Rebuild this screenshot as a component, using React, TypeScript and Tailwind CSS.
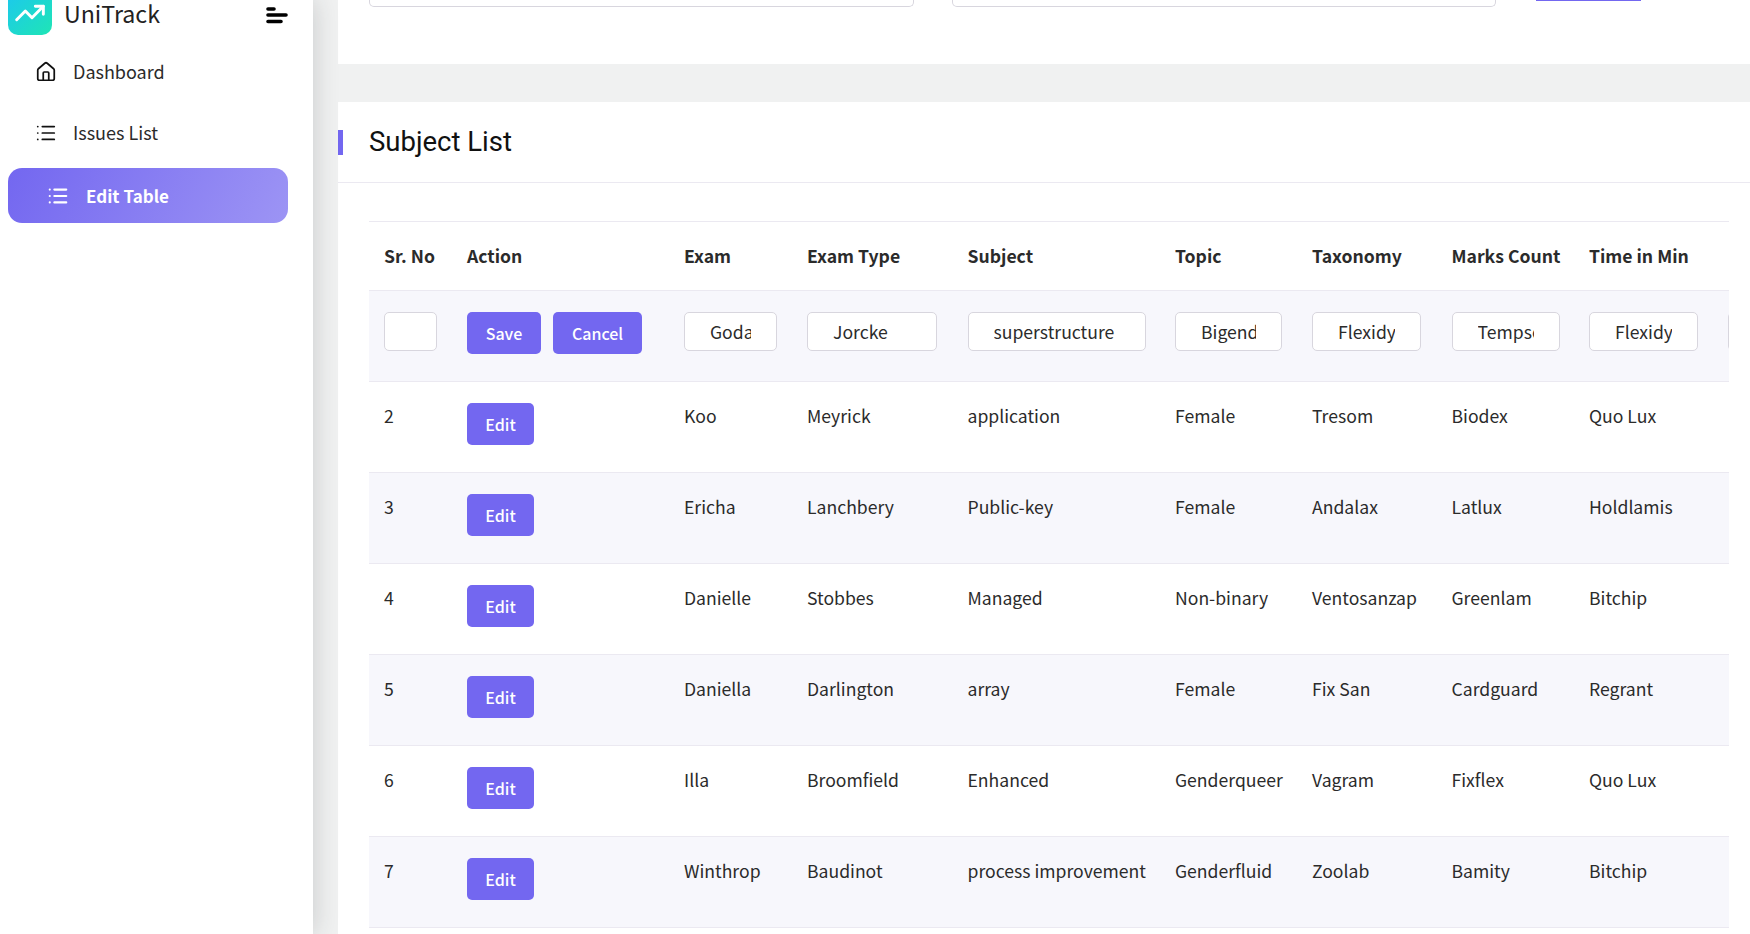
import { House, List, TrendingUp } from "lucide-react";

const font = { fontFamily: '"Noto Sans CJK SC","Noto Sans",sans-serif' };

const rows = [
  ["2", "Koo", "Meyrick", "application", "Female", "Tresom", "Biodex", "Quo Lux"],
  ["3", "Ericha", "Lanchbery", "Public-key", "Female", "Andalax", "Latlux", "Holdlamis"],
  ["4", "Danielle", "Stobbes", "Managed", "Non-binary", "Ventosanzap", "Greenlam", "Bitchip"],
  ["5", "Daniella", "Darlington", "array", "Female", "Fix San", "Cardguard", "Regrant"],
  ["6", "Illa", "Broomfield", "Enhanced", "Genderqueer", "Vagram", "Fixflex", "Quo Lux"],
  ["7", "Winthrop", "Baudinot", "process improvement", "Genderfluid", "Zoolab", "Bamity", "Bitchip"],
];

const headers = ["Sr. No", "Action", "Exam", "Exam Type", "Subject", "Topic", "Taxonomy", "Marks Count", "Time in Min", ""];

const widths = ["w-[83px]", "w-[217px]", "w-[123px]", "w-[160.5px]", "w-[207.5px]", "w-[137px]", "w-[139.5px]", "w-[137.5px]", "w-[139px]", "w-[140px]"];

function Field({ value, className }: { value: string; className: string }) {
  return (
    <input
      readOnly
      value={value}
      style={font}
      className={`block h-[39px] rounded-[5px] border border-[#d8d6de] bg-white px-[25px] text-[17.6px] text-[#2b2b2b] ${className}`}
    />
  );
}

function Btn({ children, className }: { children: string; className: string }) {
  return (
    <button className={`h-[42px] rounded-[5px] bg-[#7367f0] text-[16px] font-medium text-white ${className}`}>
      {children}
    </button>
  );
}

export default function App() {
  return (
    <div style={font} className="flex h-screen w-full overflow-hidden bg-[#f0f1f1] text-[17.6px] text-[#2b2b2b]">
      <aside className="z-10 flex w-[313px] shrink-0 flex-col bg-white px-2 text-[18px] shadow-[0_0_25px_rgba(34,41,47,0.2)]">
        <div className="-mt-[9px] flex h-[44px] w-[280px] items-center">
          <div className="flex h-[44px] w-[44px] items-center justify-center rounded-[10px] bg-[linear-gradient(135deg,#1cc8ee,#1fe5b5)]">
            <TrendingUp className="h-8 w-8 text-white" strokeWidth={2.2} />
          </div>
          <span className="ml-[12px] mt-[2px] text-[23.2px] leading-none text-[#222]">UniTrack</span>
          <svg className="ml-auto h-[24px] w-[22px]" viewBox="0 0 22 24" fill="none" stroke="#000" strokeWidth="3.6" strokeLinecap="round">
            <path d="M2 8h6M2 14h18M2 20.500h13" />
          </svg>
        </div>
        <nav className="mt-[15px] flex flex-col">
          <a className="flex h-[43px] items-center pl-[27px]">
            <House className="h-[22px] w-[22px] text-[#111]" strokeWidth={1.9} />
            <span className="ml-[16px]">Dashboard</span>
          </a>
          <a className="mt-[18px] flex h-[43px] items-center pl-[27px]">
            <List className="h-[22px] w-[22px] text-[#111]" strokeWidth={1.9} />
            <span className="ml-[16px]">Issues List</span>
          </a>
          <a className="mt-[14px] flex h-[55px] w-[280px] items-center rounded-[14px] bg-[linear-gradient(118deg,#7367f0,rgba(115,103,240,0.7))] pl-[39px] text-[17px] font-semibold text-white">
            <List className="h-[22px] w-[22px]" strokeWidth={2.3} />
            <span className="ml-[17px]">Edit Table</span>
          </a>
        </nav>
      </aside>

      <main className="ml-[25px] min-w-0 flex-1">
        <section className="h-[64px] bg-white">
          <div className="flex items-start pl-[31px]">
            <div className="h-[7px] w-[545px] rounded-b-[5px] border-x border-b border-[#d8d6de]" />
            <div className="ml-[38px] h-[7px] w-[544px] rounded-b-[5px] border-x border-b border-[#d8d6de]" />
            <div className="ml-[40px] h-px w-[105px] bg-[#7367f0]" />
          </div>
        </section>

        <section className="mt-[38px] h-[832px] bg-white">
          <div className="flex h-[81px] items-center border-b border-[#ebe9f1]">
            <h2 style={{ fontFamily: "Roboto, sans-serif" }} className="flex h-[25px] items-center border-l-[5px] border-[#7367f0] pl-[26px] text-[27.5px] font-normal text-[#111]">
              Subject List
            </h2>
          </div>
          <div className="ml-[31px] mr-[21px] mt-[38px] overflow-hidden">
            <table className="w-[1484px] table-fixed border-t border-[#ebe9f1]">
              <colgroup>
                {widths.map((w, i) => (
                  <col key={i} className={w} />
                ))}
              </colgroup>
              <thead>
                <tr className="h-[69px]">
                  {headers.map((h, i) => (
                    <th key={i} className="whitespace-nowrap px-[15px] text-left font-semibold">
                      {h}
                    </th>
                  ))}
                </tr>
              </thead>
              <tbody>
                <tr className="h-[91px] border-y border-[#ebe9f1] bg-[#f7f7fc]">
                  <td className="px-[15px] pt-[21px] align-top"><Field value="" className="w-[53px]" /></td>
                  <td className="px-[15px] pt-[21px] align-top">
                    <div className="flex gap-[12px]">
                      <Btn className="w-[74px]">Save</Btn>
                      <Btn className="w-[89px]">Cancel</Btn>
                    </div>
                  </td>
                  <td className="px-[15px] pt-[21px] align-top"><Field value="Godart" className="w-[93px]" /></td>
                  <td className="px-[15px] pt-[21px] align-top"><Field value="Jorcke" className="w-[130px]" /></td>
                  <td className="px-[15px] pt-[21px] align-top"><Field value="superstructure" className="w-[178px]" /></td>
                  <td className="px-[15px] pt-[21px] align-top"><Field value="Bigend" className="w-[107px]" /></td>
                  <td className="px-[15px] pt-[21px] align-top"><Field value="Flexidy" className="w-[109px]" /></td>
                  <td className="px-[15px] pt-[21px] align-top"><Field value="Tempsoft" className="w-[108px]" /></td>
                  <td className="px-[15px] pt-[21px] align-top"><Field value="Flexidy" className="w-[109px]" /></td>
                  <td className="px-[15px] pt-[21px] align-top"><Field value="" className="w-[108px]" /></td>
                </tr>
                {rows.map((r, i) => (
                  <tr key={r[0]} className={`h-[91px] border-b border-[#ebe9f1] ${i % 2 === 1 ? "bg-[#f7f7fc]" : "bg-white"}`}>
                    <td className="px-[15px] pt-[20px] align-top leading-[27px]">{r[0]}</td>
                    <td className="px-[15px] pt-[21px] align-top">
                      <Btn className="w-[67px]">Edit</Btn>
                    </td>
                    {r.slice(1).map((c, j) => (
                      <td key={j} className="whitespace-nowrap px-[15px] pt-[20px] align-top leading-[27px]">{c}</td>
                    ))}
                    <td />
                  </tr>
                ))}
              </tbody>
            </table>
          </div>
        </section>
      </main>
    </div>
  );
}
